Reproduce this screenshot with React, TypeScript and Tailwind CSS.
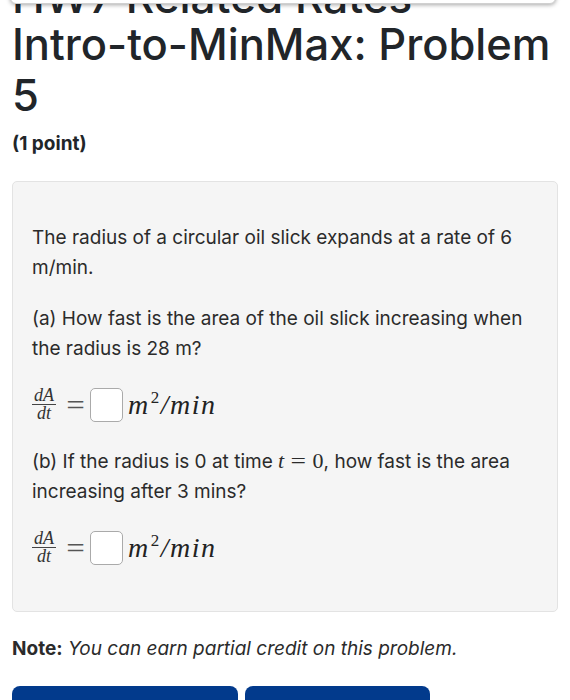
import React from "react"

const serif = { fontFamily: '"Liberation Serif", serif' }

function Frac() {
  return (
    <span className="inline-flex flex-col items-center text-[18px] leading-[15px] text-[#333]" style={serif}>
      <span className="italic px-[2px]">dA</span>
      <span className="w-full border-t border-[#444] my-[1px]" />
      <span className="italic px-[2px]">dt</span>
    </span>
  )
}

function AnswerLine() {
  return (
    <div className="flex items-center h-[36px] mt-[23px]" style={serif}>
      <Frac />
      <span className="text-[30px] text-[#555] ml-[11px] mr-[6px] leading-none scale-x-110">=</span>
      <span className="inline-block w-[33px] h-[34px] bg-white border border-[#aaa] rounded-[5px]" />
      <span className="italic text-[28px] ml-[5px] text-[#222] tracking-[1.5px] leading-none">
        m<span className="not-italic text-[17px] relative -top-[11px] ml-[1px]">2</span>/min
      </span>
    </div>
  )
}

export default function App() {
  return (
    <div className="relative w-[570px] h-[700px] overflow-hidden bg-white text-[#212529]" style={{ fontFamily: 'Inter, Roboto, sans-serif' }}>
      {/* sticky top bar, mostly scrolled off */}
      <div className="absolute -top-[40px] left-[10px] w-[546px] h-[44px] bg-white border border-[#d0d0d0] rounded-b-[6px] shadow-[0_1px_4px_rgba(0,0,0,0.35)] z-10" />

      <div className="px-[12px]">
        <h2 className="text-[44px] leading-[51px] font-medium -mt-[28px] whitespace-nowrap">HW7 Related Rates</h2>
        <h1 className="text-[43.5px] leading-[51px] font-medium -mt-[4px]">Intro-to-MinMax: Problem 5</h1>
        <p className="text-[19px] font-bold mt-[9px]">(1 point)</p>

        <div className="mt-[22px] bg-[#f5f5f5] border border-[#e3e3e3] rounded-[5px] px-[19px] pt-[41px] h-[431px] text-[19px] leading-[30px] text-[#2b2b2b]">
          <p>The radius of a circular oil slick expands at a rate of 6 m/min.</p>
          <p className="mt-[21px]">(a) How fast is the area of the oil slick increasing when the radius is 28 m?</p>
          <AnswerLine />
          <p className="mt-[23px]">
            (b) If the radius is 0 at time{" "}
            <span className="italic text-[22px]" style={serif}>t</span>
            <span className="text-[22px] mx-[8px] inline-block scale-x-125" style={serif}>=</span>
            <span className="text-[22px]" style={serif}>0</span>, how fast is the area increasing after 3 mins?
          </p>
          <AnswerLine />
        </div>

        <p className="mt-[23px] text-[19px] text-[#2b2b2b]">
          <span className="font-bold">Note:</span> <em>You can earn partial credit on this problem.</em>
        </p>

        <div className="flex gap-[7px] mt-[23px]">
          <div className="w-[226px] h-[40px] bg-[#023a8c] rounded-t-[8px]" />
          <div className="w-[185px] h-[40px] bg-[#023a8c] rounded-t-[8px]" />
        </div>
      </div>
    </div>
  )
}
